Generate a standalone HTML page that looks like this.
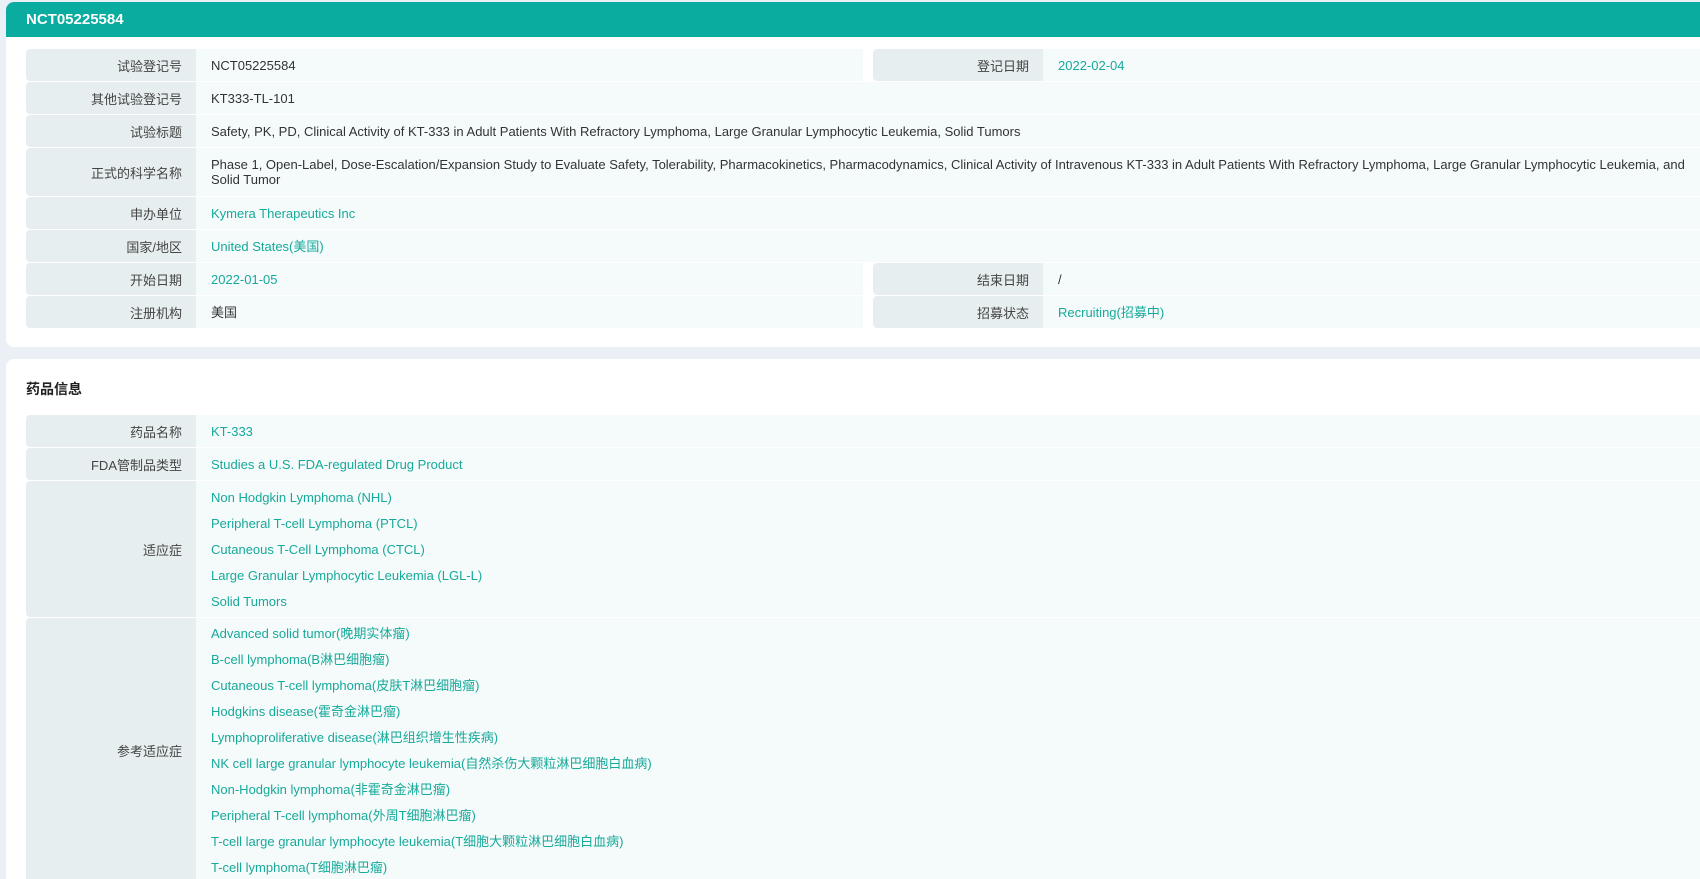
<!DOCTYPE html>
<html style="width:1700px;height:879px;overflow:hidden"><head><meta charset="utf-8"><style>
*{box-sizing:border-box;margin:0;padding:0}
body{width:1700px;height:879px;overflow:hidden;position:relative;background:#ebf0f6;font-family:"Liberation Sans","Noto Sans CJK SC",sans-serif;font-size:13px;color:#333}
.card{position:absolute;left:6px;width:1694px;background:#fff;border-radius:8px 0 0 8px}
.hd{height:35px;background:#09ac9f;border-radius:8px 0 0 0;color:#fff;font-weight:bold;font-size:15px;line-height:35px;padding-left:20px}
.row{position:absolute;left:20px;display:flex}
.l{width:170px;flex:none;background:#e7eeef;border-radius:4px 0 0 4px;text-align:right;padding-right:14px;display:flex;align-items:center;justify-content:flex-end;color:#444}
.v{flex:none;background:#f5fbfb;padding-left:15px;display:flex;align-items:center;line-height:15px}
.w{width:1504px}
.r{width:700px}
.t{color:#17a99a}
.lst{display:block;padding-top:3px}
.lst div{line-height:26px;color:#17a99a}
</style></head><body>
<div class="card" style="top:2px;height:345px">
<div class="hd">NCT05225584</div>
<div class="row" style="top:47px;height:32px"><div class="l">试验登记号</div><div class="v" style="width:667px">NCT05225584</div><div style="width:10px;flex:none;background:#fff"></div><div class="l">登记日期</div><div class="v t r">2022-02-04</div></div>
<div class="row" style="top:80px;height:32px"><div class="l">其他试验登记号</div><div class="v w">KT333-TL-101</div></div>
<div class="row" style="top:113px;height:32px"><div class="l">试验标题</div><div class="v w">Safety, PK, PD, Clinical Activity of KT-333 in Adult Patients With Refractory Lymphoma, Large Granular Lymphocytic Leukemia, Solid Tumors</div></div>
<div class="row" style="top:146px;height:48px"><div class="l">正式的科学名称</div><div class="v w" style="padding-right:10px">Phase 1, Open-Label, Dose-Escalation/Expansion Study to Evaluate Safety, Tolerability, Pharmacokinetics, Pharmacodynamics, Clinical Activity of Intravenous KT-333 in Adult Patients With Refractory Lymphoma, Large Granular Lymphocytic Leukemia, and Solid Tumor</div></div>
<div class="row" style="top:195px;height:32px"><div class="l">申办单位</div><div class="v t w">Kymera Therapeutics Inc</div></div>
<div class="row" style="top:228px;height:32px"><div class="l">国家/地区</div><div class="v t w">United States(美国)</div></div>
<div class="row" style="top:261px;height:32px"><div class="l">开始日期</div><div class="v t" style="width:667px">2022-01-05</div><div style="width:10px;flex:none;background:#fff"></div><div class="l">结束日期</div><div class="v r">/</div></div>
<div class="row" style="top:294px;height:32px"><div class="l">注册机构</div><div class="v" style="width:667px">美国</div><div style="width:10px;flex:none;background:#fff"></div><div class="l">招募状态</div><div class="v t r">Recruiting(招募中)</div></div>
</div>
<div class="card" style="top:359px;height:520px;border-radius:8px 0 0 0">
<div style="position:absolute;left:20px;top:20px;font-weight:bold;font-size:14px;color:#222">药品信息</div>
<div class="row" style="top:56px;height:32px"><div class="l">药品名称</div><div class="v t w">KT-333</div></div>
<div class="row" style="top:89px;height:32px"><div class="l">FDA管制品类型</div><div class="v t w">Studies a U.S. FDA-regulated Drug Product</div></div>
<div class="row" style="top:122px;height:136px"><div class="l">适应症</div><div class="v lst w" style="padding-top:4px"><div>Non Hodgkin Lymphoma (NHL)</div><div>Peripheral T-cell Lymphoma (PTCL)</div><div>Cutaneous T-Cell Lymphoma (CTCL)</div><div>Large Granular Lymphocytic Leukemia (LGL-L)</div><div>Solid Tumors</div></div></div>
<div class="row" style="top:259px;height:261px"><div class="l" style="align-items:flex-start;padding-top:123px;border-radius:4px 0 0 0">参考适应症</div><div class="v lst w"><div>Advanced solid tumor(晚期实体瘤)</div><div>B-cell lymphoma(B淋巴细胞瘤)</div><div>Cutaneous T-cell lymphoma(皮肤T淋巴细胞瘤)</div><div>Hodgkins disease(霍奇金淋巴瘤)</div><div>Lymphoproliferative disease(淋巴组织增生性疾病)</div><div>NK cell large granular lymphocyte leukemia(自然杀伤大颗粒淋巴细胞白血病)</div><div>Non-Hodgkin lymphoma(非霍奇金淋巴瘤)</div><div>Peripheral T-cell lymphoma(外周T细胞淋巴瘤)</div><div>T-cell large granular lymphocyte leukemia(T细胞大颗粒淋巴细胞白血病)</div><div>T-cell lymphoma(T细胞淋巴瘤)</div></div></div>
</div>
</body></html>
